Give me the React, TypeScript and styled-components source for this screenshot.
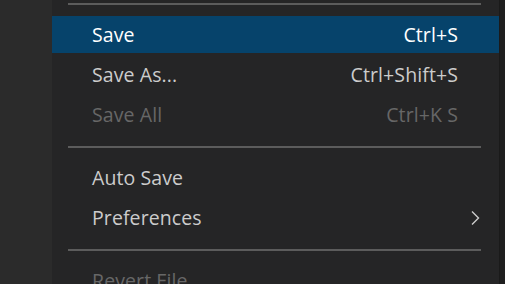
import React from "react"
import styled, { createGlobalStyle } from "styled-components"

const GlobalStyle = createGlobalStyle`
  html, body {
    margin: 0;
    padding: 0;
    background: #2b2b2b;
    overflow: hidden;
  }
`

type Item = {
  label: string
  shortcut?: string
  active?: boolean
  disabled?: boolean
  submenu?: boolean
}

const groups: Item[][] = [
  [
    { label: "Save", shortcut: "Ctrl+S", active: true },
    { label: "Save As...", shortcut: "Ctrl+Shift+S" },
    { label: "Save All", shortcut: "Ctrl+K S", disabled: true },
  ],
  [
    { label: "Auto Save" },
    { label: "Preferences", submenu: true },
  ],
  [{ label: "Revert File", disabled: true }],
]

const App = () => {
  return (
    <Screen>
      <GlobalStyle />
      <SideStrip />
      <Menu>
        {groups.map((group, gi) => (
          <Group key={gi}>
            <Separator />
            {group.map((item) => (
              <Row key={item.label} $active={item.active} $disabled={item.disabled}>
                <Label>{item.label}</Label>
                {item.shortcut && <Shortcut>{item.shortcut}</Shortcut>}
                {item.submenu && (
                  <Chevron width="10" height="16" viewBox="0 0 10 16">
                    <path d="M2 1.5 L8.5 8 L2 14.5" fill="none" stroke="#cccccc" strokeWidth="1.4" />
                  </Chevron>
                )}
              </Row>
            ))}
          </Group>
        ))}
      </Menu>
      <EdgeStrip />
    </Screen>
  )
}

const Screen = styled.div`
  display: flex;
  width: 505px;
  height: 284px;
  overflow: hidden;
  font-family: "Open Sans", "Noto Sans", sans-serif;
`

const SideStrip = styled.div`
  width: 52px;
  flex-shrink: 0;
  background: #2b2b2b;
`

const Menu = styled.div`
  flex: 1;
  display: flex;
  flex-direction: column;
  gap: 13px;
  padding-top: 3px;
  background: #252526;
`

const Group = styled.div`
  display: flex;
  flex-direction: column;
  gap: 3px;
  flex-shrink: 0;
`

const EdgeStrip = styled.div`
  width: 5px;
  flex-shrink: 0;
  background: #1f1f1f;
  border-left: 1px solid #1a1a1a;
`

const Separator = styled.div`
  height: 2px;
  flex-shrink: 0;
  margin: 0 18px 8px 16px;
  background: #5c5c5c;
`

const Row = styled.div<{ $active?: boolean; $disabled?: boolean }>`
  display: flex;
  align-items: center;
  flex-shrink: 0;
  height: 37px;
  padding: 0 41px 0 40px;
  font-size: 19.5px;
  letter-spacing: 0.1px;
  background: ${(p) => (p.$active ? "#06436b" : "transparent")};
  color: ${(p) => (p.$active ? "#ffffff" : p.$disabled ? "#676767" : "#cccccc")};
`

const Label = styled.span`
  flex: 1;
`

const Shortcut = styled.span``

const Chevron = styled.svg`
  margin-right: -22px;
`

export default App
